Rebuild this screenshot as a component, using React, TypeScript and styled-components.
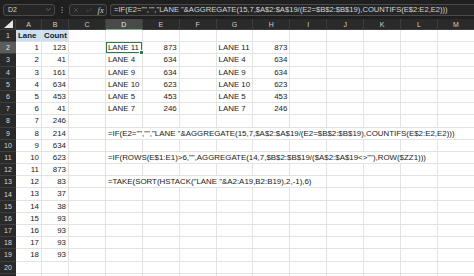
import React from "react";
import styled, { createGlobalStyle } from "styled-components";
import { X, Check, ChevronDown, EllipsisVertical } from "lucide-react";

const GlobalStyle = createGlobalStyle`
  html, body {
    margin: 0;
    padding: 0;
    background: #fff;
    overflow: hidden;
  }
  body {
    font-family: "Liberation Sans", Arial, sans-serif;
  }
`;

const COLS = ["A", "B", "C", "D", "E", "F", "G", "H", "I", "J", "K", "L", "M"];
const counts = [123, 41, 161, 634, 453, 41, 246, 214, 634, 623, 873, 83, 37, 38, 93, 93, 93, 93];
const lanes = ["LANE 11", "LANE 4", "LANE 9", "LANE 10", "LANE 5", "LANE 7"];
const tops = [873, 634, 634, 623, 453, 246];

const F1 = '=IF(E2="","","LANE "&AGGREGATE(15,7,$A$2:$A$19/(E2=$B$2:$B$19),COUNTIFS(E$2:E2,E2)))';
const F2 = '=IF(ROWS(E$1:E1)>6,"",AGGREGATE(14,7,$B$2:$B$19/($A$2:$A$19<>""),ROW($ZZ1)))';
const F3 = '=TAKE(SORT(HSTACK("LANE "&A2:A19,B2:B19),2,-1),6)';

type CellData = { text?: string | number; align?: "left" | "right"; span?: number; bold?: boolean; bg?: string; selected?: boolean };

const buildRow = (r: number): CellData[] => {
  if (r === 1) {
    return [
      { text: "Lane", bold: true, bg: "#cddff2" },
      { text: "Count", bold: true, bg: "#cddff2" },
      ...Array(11).fill({}),
    ];
  }
  const row: CellData[] = [];
  if (r <= 19) {
    row.push({ text: r - 1, align: "right" });
    row.push({ text: counts[r - 2], align: "right" });
  } else {
    row.push({}, {});
  }
  row.push({});
  if (r >= 2 && r <= 7) {
    const i = r - 2;
    row.push({ text: lanes[i], selected: r === 2 });
    row.push({ text: tops[i], align: "right" });
    row.push({});
    row.push({ text: lanes[i] });
    row.push({ text: tops[i], align: "right" });
    row.push(...Array(5).fill({}));
  } else if (r === 9) {
    row.push({ text: F1, span: 10 });
  } else if (r === 11) {
    row.push({ text: F2, span: 9 }, {});
  } else if (r === 13) {
    row.push({ text: F3, span: 6 }, {}, {}, {}, {});
  } else {
    row.push(...Array(10).fill({}));
  }
  return row;
};

const Page = styled.div`
  width: 474px;
  height: 276px;
  overflow: hidden;
  display: flex;
  flex-direction: column;
`;

const FormulaBar = styled.div`
  height: 19px;
  flex: none;
  background: #1f1f1f;
  display: flex;
  align-items: center;
  padding: 0 0 0 3px;
  gap: 3px;
  box-sizing: border-box;
`;

const BarBox = styled.div<{ $w?: number }>`
  height: 12px;
  ${(p) => (p.$w ? `width: ${p.$w}px;` : "flex: 1;")}
  box-sizing: border-box;
  border: 1px solid #4a4a4a;
  border-radius: 3px;
  background: #262626;
  display: flex;
  align-items: center;
  color: #d4d4d4;
  font-size: 7.6px;
  white-space: nowrap;
  overflow: hidden;
`;

const NameText = styled.span`
  flex: 1;
  padding-left: 4px;
  font-size: 7px;
  color: #cfcfcf;
`;

const FormulaText = styled.span`
  padding-left: 3px;
`;

const IconRow = styled.div`
  display: flex;
  align-items: center;
  justify-content: space-around;
  width: 100%;
  color: #6c6c6c;
`;

const Fx = styled.span`
  font-family: "Liberation Serif", serif;
  font-style: italic;
  font-size: 8.5px;
  color: #c8c8c8;
`;

const Sheet = styled.div`
  display: grid;
  grid-template-columns: 16px 26px 27px repeat(11, 36.9px);
  grid-template-rows: 11px;
  grid-auto-rows: 12.2px;
`;

const Corner = styled.div`
  background: #2a2a2a;
  border-right: 1px solid #3e3e3e;
  border-bottom: 1px solid #3e3e3e;
  display: flex;
  align-items: flex-end;
  justify-content: flex-end;
  padding: 0 2px 1px 0;
  box-sizing: border-box;
`;

const ColHead = styled.div<{ $active?: boolean }>`
  background: ${(p) => (p.$active ? "#4a4a4a" : "#2a2a2a")};
  color: ${(p) => (p.$active ? "#e8e8e8" : "#cfcfcf")};
  border-right: 1px solid #3e3e3e;
  border-bottom: 1px solid ${(p) => (p.$active ? "#6fae7f" : "#3e3e3e")};
  box-sizing: border-box;
  font-size: 7px;
  display: flex;
  align-items: center;
  justify-content: center;
`;

const RowHead = styled.div<{ $active?: boolean }>`
  background: ${(p) => (p.$active ? "#5c5c5c" : "#2a2a2a")};
  color: ${(p) => (p.$active ? "#f0f0f0" : "#d8d8d8")};
  border-bottom: 1px solid #3e3e3e;
  box-sizing: border-box;
  font-size: 7px;
  display: flex;
  align-items: center;
  justify-content: center;
`;

const Cell = styled.div<{ $align?: string; $span?: number; $bold?: boolean; $bg?: string; $selected?: boolean }>`
  position: relative;
  grid-column: span ${(p) => p.$span || 1};
  background: ${(p) => p.$bg || "#fff"};
  border-right: 1px solid #e3e3e3;
  border-bottom: 1px solid #e3e3e3;
  box-sizing: border-box;
  padding: 0 2px;
  font-size: 7.9px;
  font-weight: ${(p) => (p.$bold ? 700 : 400)};
  color: #1a1a1a;
  text-align: ${(p) => p.$align || "left"};
  line-height: 11.5px;
  white-space: nowrap;
  overflow: visible;
  ${(p) =>
    p.$selected &&
    `
    box-shadow: inset 0 0 0 1px #2e7a4d;
    &::after {
      content: "";
      position: absolute;
      right: -2px;
      bottom: -2px;
      width: 3px;
      height: 3px;
      background: #2e7a4d;
      border: 1px solid #fff;
      z-index: 2;
    }
  `}
`;

export default function App() {
  const rows = Array.from({ length: 21 }, (_, i) => i + 1);
  return (
    <Page>
      <GlobalStyle />
      <FormulaBar>
        <BarBox $w={52}>
          <NameText>D2</NameText>
          <ChevronDown size={7} color="#9a9a9a" style={{ marginRight: 2 }} />
        </BarBox>
        <EllipsisVertical size={8} color="#8a8a8a" />
        <BarBox $w={38}>
          <IconRow>
            <X size={8} strokeWidth={1.5} />
            <Check size={8} strokeWidth={1.5} />
            <Fx>fx</Fx>
          </IconRow>
        </BarBox>
        <BarBox style={{ borderRadius: "3px 0 0 3px", borderRight: "none" }}>
          <FormulaText>{F1}</FormulaText>
        </BarBox>
      </FormulaBar>
      <Sheet>
        <Corner>
          <svg width="9" height="8" viewBox="0 0 9 8">
            <polygon points="9,0 9,8 0,8" fill="#e6e6e6" />
          </svg>
        </Corner>
        {COLS.map((c) => (
          <ColHead key={c} $active={c === "D"}>
            {c}
          </ColHead>
        ))}
        {rows.map((r) => (
          <React.Fragment key={r}>
            <RowHead $active={r === 2}>{r < 21 ? r : ""}</RowHead>
            {buildRow(r).map((cell, j) => (
              <Cell
                key={j}
                $align={cell.align}
                $span={cell.span}
                $bold={cell.bold}
                $bg={cell.bg}
                $selected={cell.selected}
              >
                {cell.text}
              </Cell>
            ))}
          </React.Fragment>
        ))}
      </Sheet>
    </Page>
  );
}
